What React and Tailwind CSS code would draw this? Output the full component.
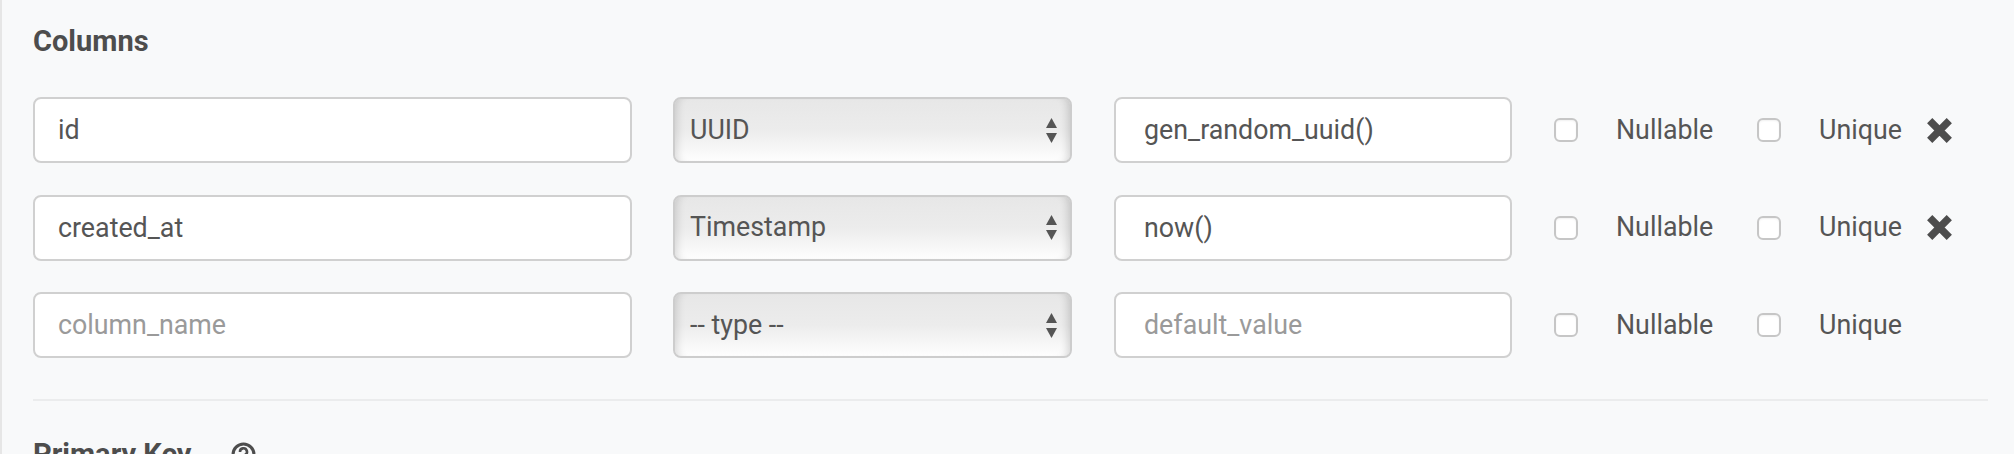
import { useState } from 'react';

const initialColumns = [
  { name: 'id', type: 'UUID', def: 'gen_random_uuid()', removable: true },
  { name: 'created_at', type: 'Timestamp', def: 'now()', removable: true },
  { name: '', type: '', def: '', removable: false },
];

function SelectArrows() {
  return (
    <svg width="11" height="25" viewBox="0 0 11 25" className="shrink-0 fill-[#555]">
      <path d="M5.5 0 L11 10 L0 10 Z" />
      <path d="M0 15 L11 15 L5.5 25 Z" />
    </svg>
  );
}

function RemoveIcon() {
  return (
    <svg width="25" height="25" viewBox="0 0 25 25" className="shrink-0 stroke-[#4d4d4d]">
      <path d="M2.7 2.7 L22.3 22.3 M22.3 2.7 L2.7 22.3" strokeWidth="7.4" strokeLinecap="butt" />
    </svg>
  );
}

function HelpIcon() {
  return (
    <svg width="25" height="25" viewBox="0 0 25 25" className="shrink-0">
      <circle cx="12.5" cy="12.5" r="10.5" fill="none" stroke="#4d4d4d" strokeWidth="3" />
      <path d="M9 10 a3.5 3.5 0 1 1 5 3 c-1.2.6-1.5 1.2-1.5 2.5" fill="none" stroke="#4d4d4d" strokeWidth="2.6" />
      <circle cx="12.5" cy="18.6" r="1.6" fill="#4d4d4d" />
    </svg>
  );
}

function Checkbox({ checked, onChange }) {
  return (
    <button type="button" onClick={onChange}
      className="w-[24px] h-[24px] shrink-0 rounded-[6px] border-2 border-[#c6c6c6] bg-white shadow-[inset_0_1px_2px_rgba(0,0,0,0.06)]">
      {checked && <span className="block text-[16px] leading-none text-[#555]">✓</span>}
    </button>
  );
}

export default function App() {
  const [columns, setColumns] = useState(initialColumns);
  const [flags, setFlags] = useState({});

  const toggle = (key) => setFlags(f => ({ ...f, [key]: !f[key] }));
  const remove = (i) => setColumns(cols => cols.filter((_, j) => j !== i));

  return (
    <div className="min-h-screen bg-[#f8f9fa] border-l-2 border-[#e6e6e6] pl-[31px] pr-[26px] pt-[27px] font-[Roboto,sans-serif] text-[#555]">
      <h4 className="text-[29px] leading-none font-bold text-[#4d4d4d]">Columns</h4>

      <div className="mt-[41px] flex flex-col gap-[31.5px]">
        {columns.map((c, i) => (
          <div key={i} className="flex items-center h-[66px] text-[26.8px]">
            <input readOnly value={c.name} placeholder="column_name"
              className="h-full w-[599px] shrink-0 rounded-lg border-2 border-[#d0d0d0] bg-white pl-[23px] text-[#555] placeholder:text-[#9a9a9a] outline-none" />

            <div className="ml-[41px] h-full w-[399px] shrink-0 flex items-center justify-between rounded-lg border-2 border-[#cdcdcd] bg-linear-to-b from-[#e7e7e7] via-[#ececec] to-[#fefefe] pl-[15px] pr-[13px] shadow-[inset_9px_0_8px_-7px_rgba(0,0,0,0.14),inset_-9px_0_8px_-7px_rgba(0,0,0,0.16)]">
              <span>{c.type || '-- type --'}</span>
              <SelectArrows />
            </div>

            <input readOnly value={c.def} placeholder="default_value"
              className="ml-[42px] h-full w-[398px] shrink-0 rounded-lg border-2 border-[#d0d0d0] bg-white pl-[28px] text-[#555] placeholder:text-[#9a9a9a] outline-none" />

            <div className="ml-[42px] w-[203px] shrink-0 flex items-center">
              <Checkbox checked={flags[`n${i}`]} onChange={() => toggle(`n${i}`)} />
              <span className="ml-[38px]">Nullable</span>
            </div>
            <div className="w-[170px] shrink-0 flex items-center">
              <Checkbox checked={flags[`u${i}`]} onChange={() => toggle(`u${i}`)} />
              <span className="ml-[38px]">Unique</span>
            </div>
            {c.removable && (
              <button type="button" onClick={() => remove(i)} className="flex">
                <RemoveIcon />
              </button>
            )}
          </div>
        ))}
      </div>

      <div className="mt-[41px] h-[2px] bg-[#ebeced]" />

      <div className="mt-[39px] flex items-center">
        <h4 className="text-[29px] leading-none font-bold text-[#4d4d4d]">Primary Key</h4>
        <span className="ml-[40px] flex"><HelpIcon /></span>
      </div>
    </div>
  );
}
